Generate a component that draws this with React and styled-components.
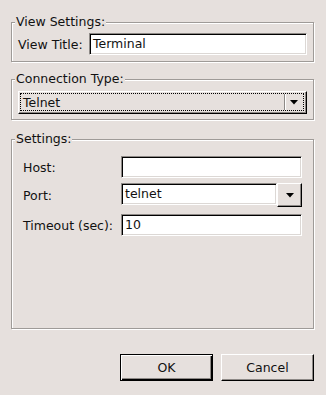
import React from 'react';
import styled, { createGlobalStyle } from 'styled-components';

const bg = '#e6e0dd';

const GlobalStyle = createGlobalStyle`
  html, body {
    margin: 0;
    padding: 0;
    background: ${bg};
  }
  body {
    font-family: "DejaVu Sans", "Liberation Sans", sans-serif;
    font-size: 12.5px;
    color: #111;
  }
`

const Dialog = styled.div`
  width: 326px;
  height: 395px;
  box-sizing: border-box;
  padding: 22px 12px 0 11px;
  display: flex;
  flex-direction: column;
  background: ${bg};
`

const Group = styled.section`
  margin-top: ${p => p.$top || 0}px;
  display: flex;
  flex-direction: column;
  border: 1px solid #9f9b98;
  box-shadow: inset 1px 1px 0 #fff, 1px 1px 0 #fff;
  padding: 0 ${p => p.$padX || 6}px ${p => p.$padBottom || 6}px;
  min-height: ${p => p.$minHeight || 0}px;
  box-sizing: border-box;
`

const Title = styled.div`
  align-self: flex-start;
  margin: -8px 0 0 ${p => p.$shift || -3}px;
  padding: 0 1px;
  line-height: 14px;
  background: ${bg};
`

const Row = styled.div`
  display: flex;
  align-items: center;
  margin-top: ${p => p.$top || 0}px;
`

const Label = styled.span`
  width: ${p => p.$width}px;
  flex: none;
  white-space: nowrap;
`

const TextField = styled.div`
  flex: 1;
  height: 22px;
  box-sizing: border-box;
  background: #fff;
  border: 1px solid;
  border-color: #8d8986 #fff #fff #8d8986;
  box-shadow: inset 1px 1px 0 #000, inset -1px -1px 0 #dcd8d5;
  padding: 0 3px;
  display: flex;
  align-items: center;
  line-height: 14px;
`

const Combo = styled.div`
  flex: 1;
  height: 23px;
  box-sizing: border-box;
  display: flex;
  border: 1px solid;
  border-color: #fff #000 #000 #fff;
  box-shadow: inset -1px -1px 0 #8d8986;
  padding: 1px 2px 2px 1px;
  background: ${bg};
`

const Focus = styled.div`
  flex: 1;
  display: flex;
  align-items: center;
  border: 1px dotted #000;
`

const ComboText = styled.span`
  flex: 1;
  padding-left: 2px;
`

const ArrowCell = styled.div`
  width: 18px;
  align-self: stretch;
  display: flex;
  align-items: center;
  justify-content: center;
  border-left: 1px solid #8d8986;
  box-shadow: inset 1px 0 0 #fff;
`

const ArrowButton = styled.div`
  width: 25px;
  height: 24px;
  box-sizing: border-box;
  flex: none;
  display: flex;
  align-items: center;
  justify-content: center;
  border: 1px solid;
  border-color: #fff #000 #000 #fff;
  box-shadow: inset -1px -1px 0 #8d8986;
  background: ${bg};
`

const Editable = styled.div`
  flex: 1;
  display: flex;
`

const Spacer = styled.div`
  flex: 1;
`

const ButtonBar = styled.div`
  display: flex;
  justify-content: flex-end;
  gap: 8px;
  margin-bottom: 14px;
`

const Button = styled.button`
  width: 93px;
  height: 27px;
  box-sizing: border-box;
  font: inherit;
  color: #111;
  background: ${bg};
  border: 1px solid;
  border-color: ${p => (p.$default ? '#000' : '#fff #000 #000 #fff')};
  box-shadow: ${p =>
    p.$default
      ? 'inset 1px 1px 0 #fff, inset -1px -1px 0 #000, inset -2px -2px 0 #8d8986'
      : 'inset -1px -1px 0 #8d8986'};
  padding: 0;
`

const Arrow = () => (
  <svg width="8" height="5" viewBox="0 0 8 5">
    <polygon points="0,0 8,0 4,4.5" fill="#000" />
  </svg>
);

export default function App() {
  return (
    <>
      <GlobalStyle />
      <Dialog>
        <Group $padBottom={6}>
          <Title>View Settings:</Title>
          <Row $top={4}>
            <Label $width={71}>View Title:</Label>
            <TextField>Terminal</TextField>
          </Row>
        </Group>

        <Group $top={17} $padBottom={5}>
          <Title>Connection Type:</Title>
          <Row $top={5}>
            <Combo>
              <Focus>
                <ComboText>Telnet</ComboText>
                <ArrowCell>
                  <Arrow />
                </ArrowCell>
              </Focus>
            </Combo>
          </Row>
        </Group>

        <Group $top={19} $padX={11} $minHeight={190}>
          <Title $shift={-8}>Settings:</Title>
          <Row $top={10}>
            <Label $width={98}>Host:</Label>
            <TextField />
          </Row>
          <Row $top={5}>
            <Label $width={98}>Port:</Label>
            <Editable>
              <TextField>telnet</TextField>
              <ArrowButton>
                <Arrow />
              </ArrowButton>
            </Editable>
          </Row>
          <Row $top={7}>
            <Label $width={98}>Timeout (sec):</Label>
            <TextField>10</TextField>
          </Row>
        </Group>

        <Spacer />
        <ButtonBar>
          <Button $default>OK</Button>
          <Button>Cancel</Button>
        </ButtonBar>
      </Dialog>
    </>
  );
}
